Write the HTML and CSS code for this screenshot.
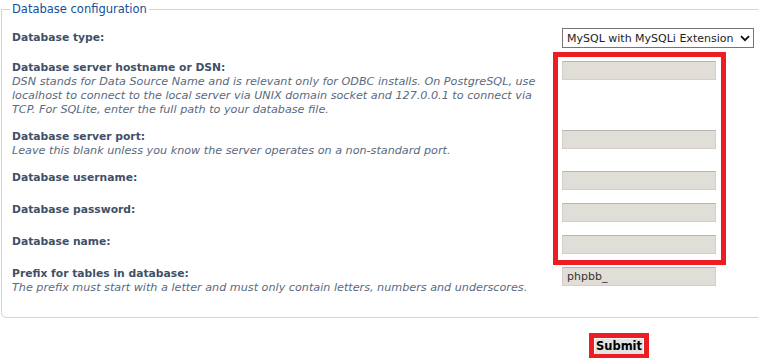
FILE: index.html
```html
<!DOCTYPE html>
<html lang="en">
<head>
    <meta charset="UTF-8">
    <title>Database configuration</title>
    <link rel="stylesheet" href="styles.css">
</head>
<body>
    <div class="page">
        <form>
            <fieldset class="config">
                <legend>Database configuration</legend>

                <div class="row row-center">
                    <div class="label"><label for="dbms">Database type:</label></div>
                    <div class="field select-wrap">
                        <select id="dbms">
                            <option>MySQL with MySQLi Extension</option>
                        </select>
                        <svg class="chevron" width="10" height="7" viewBox="0 0 10 7"><path d="M1 1.2 L5 5.2 L9 1.2" fill="none" stroke="#111" stroke-width="1.8"/></svg>
                    </div>
                </div>

                <div class="group highlight">
                    <div class="row">
                        <div class="label">
                            <label for="dbhost">Database server hostname or DSN:</label>
                            <span class="explain">DSN stands for Data Source Name and is relevant only for ODBC installs. On PostgreSQL, use localhost to connect to the local server via UNIX domain socket and 127.0.0.1 to connect via TCP. For SQLite, enter the full path to your database file.</span>
                        </div>
                        <div class="field"><input type="text" id="dbhost"></div>
                    </div>
                    <div class="row">
                        <div class="label">
                            <label for="dbport">Database server port:</label>
                            <span class="explain">Leave this blank unless you know the server operates on a non-standard port.</span>
                        </div>
                        <div class="field"><input type="text" id="dbport"></div>
                    </div>
                    <div class="row">
                        <div class="label"><label for="dbuser">Database username:</label></div>
                        <div class="field"><input type="text" id="dbuser"></div>
                    </div>
                    <div class="row">
                        <div class="label"><label for="dbpasswd">Database password:</label></div>
                        <div class="field"><input type="password" id="dbpasswd"></div>
                    </div>
                    <div class="row">
                        <div class="label"><label for="dbname">Database name:</label></div>
                        <div class="field"><input type="text" id="dbname"></div>
                    </div>
                </div>

                <div class="row">
                    <div class="label">
                        <label for="table_prefix">Prefix for tables in database:</label>
                        <span class="explain">The prefix must start with a letter and must only contain letters, numbers and underscores.</span>
                    </div>
                    <div class="field"><input type="text" id="table_prefix" value="phpbb_"></div>
                </div>
            </fieldset>

            <div class="submit-buttons">
                <span class="submit-mark"><button type="submit" class="button">Submit</button></span>
            </div>
        </form>
    </div>
</body>
</html>
```

FILE: styles.css
```css
body {
    margin: 0;
    background-color: #fff;
    font-family: 'DejaVu Sans', Verdana, sans-serif;
    color: #425067;
    overflow: hidden; /* the page is wider than the window */
}

.page {
    width: 1238px;
}

.config {
    margin: 0 0 0 1px;
    padding: 10px 10px 22px 10px;
    border: 1px solid #d4d4d4;
    border-radius: 0 0 5px 5px;
    display: flex;
    flex-direction: column;
    gap: 13px;
}

.config legend {
    padding: 0 2px;
    margin-left: -2px;
    font-size: 11.5px;
    line-height: 18px;
    color: #115098;
}

.group {
    display: flex;
    flex-direction: column;
    gap: 13px;
}

/* red annotation box drawn over the inputs */
.highlight {
    position: relative;
}

.highlight::after {
    content: "";
    position: absolute;
    top: -9px;
    bottom: -11px;
    left: 541px;
    width: 173px;
    border: 5px solid #ee1d23;
    box-sizing: border-box;
    pointer-events: none;
}

.row {
    display: flex;
    align-items: flex-start;
}

.row-center {
    align-items: center;
}

.label {
    width: 535px;
    margin-right: 15px;
    flex: none;
}

.label label {
    display: block;
    font-weight: bold;
    font-size: 10.75px;
    line-height: 14px;
}

.explain {
    display: block;
    font-style: italic;
    font-size: 11.2px;
    line-height: 14px;
    color: #5a6a80;
}

.field {
    display: flex;
}

.field input {
    display: block;
    width: 154px;
    height: 19px;
    margin: 0;
    padding: 1px 4px;
    box-sizing: border-box;
    background-color: #e1ded8;
    border: 1px solid #d3d0c9;
    border-top-color: #b6b4ae;
    font-family: 'DejaVu Sans', Verdana, sans-serif;
    font-size: 11px;
    color: #333;
}

.select-wrap {
    position: relative;
}

.select-wrap select {
    appearance: none;
    display: block;
    width: 192px;
    height: 20px;
    margin: 0;
    padding: 0 14px 0 4px;
    border: 1px solid #767676;
    border-radius: 0;
    background-color: #fff;
    font-family: 'DejaVu Sans', Verdana, sans-serif;
    font-size: 11px;
    color: #222;
}

.chevron {
    position: absolute;
    right: 4px;
    top: 7px;
}

.submit-buttons {
    margin-top: 15px;
    text-align: center;
}

.submit-mark {
    display: inline-block;
    border: 5px solid #ee1d23;
    border-bottom-width: 4px;
    padding: 1px 1px 0;
}

.button {
    display: block;
    margin: 0;
    padding: 0 1px;
    height: 15px;
    border: none;
    background-color: #e3e3e3;
    font-family: 'DejaVu Sans', Verdana, sans-serif;
    font-weight: bold;
    font-size: 11.5px;
    line-height: 15px;
    color: #000;
}
```
